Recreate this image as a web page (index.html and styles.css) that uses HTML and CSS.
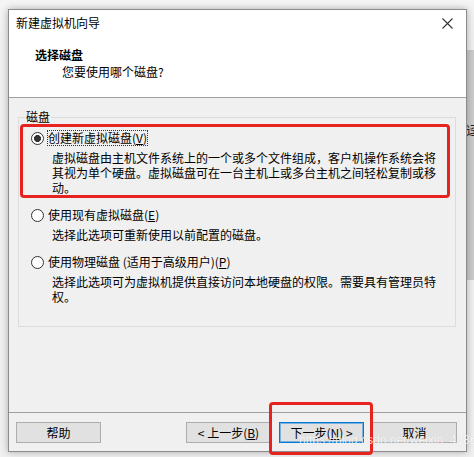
FILE: index.html
```html
<!DOCTYPE html>
<html>

	<head>
		<meta charset="UTF-8">
		<title>新建虚拟机向导</title>
		<link rel="stylesheet" href="styles.css">
	</head>

	<body>
		<div class="desk">
			<div class="behind">迳</div>

			<div class="window">
				<div class="head">
					<div class="titlebar">
						<span class="title">新建虚拟机向导</span>
						<svg class="close" width="11" height="11" viewBox="0 0 11 11">
							<path d="M0.5 0.5 L10.5 10.5 M10.5 0.5 L0.5 10.5" stroke="#333" stroke-width="1.1" fill="none"/>
						</svg>
					</div>
					<div class="heading">选择磁盘</div>
					<div class="sub">您要使用哪个磁盘?</div>
				</div>

				<div class="content">
					<fieldset class="group">
						<legend>磁盘</legend>
						<div class="option">
							<div class="choice"><span class="radio on"></span><span class="label focus">创建新虚拟磁盘(<u>V</u>)</span></div>
							<p class="desc">虚拟磁盘由主机文件系统上的一个或多个文件组成，客户机操作系统会将其视为单个硬盘。虚拟磁盘可在一台主机上或多台主机之间轻松复制或移动。</p>
						</div>
						<div class="option">
							<div class="choice"><span class="radio"></span><span class="label">使用现有虚拟磁盘(<u>E</u>)</span></div>
							<p class="desc">选择此选项可重新使用以前配置的磁盘。</p>
						</div>
						<div class="option">
							<div class="choice"><span class="radio"></span><span class="label">使用物理磁盘 (适用于高级用户)(<u>P</u>)</span></div>
							<p class="desc">选择此选项可为虚拟机提供直接访问本地硬盘的权限。需要具有管理员特权。</p>
						</div>
					</fieldset>
				</div>

				<div class="foot">
					<button class="btn">帮助</button>
					<button class="btn back">&lt; 上一步(<u>B</u>)</button>
					<button class="btn default">下一步(<u>N</u>) &gt;</button>
					<button class="btn">取消</button>
				</div>
			</div>

			<!-- 红框标注 -->
			<div class="mark mark-option"></div>
			<div class="mark mark-next"></div>
			<div class="watermark">https://blog.csdn.net/weixin_43861520</div>
		</div>
	</body>

</html>
```

FILE: styles.css
```css
body {
	margin: 0;
	background: #f0f0f0;
	font-family: "Noto Sans CJK SC", "Noto Sans", sans-serif;
	font-size: 12px;
	color: #000;
}

.desk {
	position: relative;
	height: 457px;
	padding: 9px 0 0 8px;
	box-sizing: border-box;
	overflow: hidden;
	background: linear-gradient(#f5f5f5, #f0f0f0 40px);
}

.behind {
	position: absolute;
	left: 466px;
	top: 50px;
	width: 10px;
	height: 230px;
	padding-top: 72px;
	box-sizing: border-box;
	background: #cbcbcb;
	font-size: 13px;
	line-height: 16px;
	color: #222;
}

.window {
	position: relative;
	width: 459px;
	height: 443px;
	box-sizing: border-box;
	border: 1px solid #8c8c8c;
	background: #f0f0f0;
	box-shadow: 0 0 7px rgba(0, 0, 0, 0.3);
	display: flex;
	flex-direction: column;
}

.head {
	flex: none;
	height: 87px;
	background: #fff;
	border-bottom: 1px solid #a0a0a0;
}

.titlebar {
	display: flex;
	justify-content: space-between;
	align-items: center;
	height: 26px;
	padding: 0 13px 0 7px;
	line-height: 16px;
}

.close {
	display: block;
}

.heading {
	margin-top: 11px;
	padding-left: 26px;
	font-weight: bold;
	line-height: 16px;
}

.sub {
	margin-top: 1px;
	padding-left: 53px;
	line-height: 16px;
}

.content {
	flex: 1;
	padding: 11px 10px 0 9px;
}

.group {
	margin: 0;
	padding: 5px 0 22px 0;
	border: 1px solid #dcdcdc;
}

.group legend {
	margin-left: 6px;
	padding: 0 1px;
	line-height: 16px;
}

.option {
	padding-left: 12px;
}

.option + .option {
	margin-top: 12px;
}

.choice {
	display: flex;
	align-items: center;
	height: 16px;
}

.radio {
	width: 13px;
	height: 13px;
	box-sizing: border-box;
	border: 1px solid #333;
	border-radius: 50%;
	background: #fff;
	margin-right: 3px;
}

.radio.on {
	background: radial-gradient(circle, #333 0, #333 3.2px, #fff 3.8px);
}

.label {
	border: 1px solid transparent;
	line-height: 14px;
}

.label.focus {
	border: 1px dotted #333;
}

.desc {
	margin: 4px 0 0 21px;
	width: 390px;
	line-height: 15px;
}

.foot {
	flex: none;
	height: 39px;
	box-sizing: border-box;
	border-top: 1px solid #a0a0a0;
	padding: 9px 9px 0 7px;
	display: flex;
	align-items: flex-start;
	gap: 8px;
}

.btn {
	width: 85px;
	height: 21px;
	padding: 0;
	margin: 0;
	font-family: inherit;
	font-size: 12px;
	line-height: 19px;
	color: #000;
	background: #e1e1e1;
	border: 1px solid #adadad;
}

.btn.back {
	margin-left: auto;
}

.btn.default {
	border-color: #0078d7;
	box-shadow: inset 0 0 0 1px rgba(0, 120, 215, 0.45);
}

.mark {
	position: absolute;
	border: 3px solid #e6231e;
	border-radius: 4px;
	box-sizing: border-box;
}

.mark-option {
	left: 20px;
	top: 124px;
	width: 430px;
	height: 74px;
}

.mark-next {
	left: 269px;
	top: 402px;
	width: 104px;
	height: 53px;
}

.watermark {
	position: absolute;
	left: 299px;
	top: 433px;
	font-family: "Liberation Sans", sans-serif;
	font-size: 12px;
	line-height: 14px;
	white-space: nowrap;
	color: rgba(255, 255, 255, 0.8);
	text-shadow: 0 0 1px rgba(0, 0, 0, 0.12);
}
```
